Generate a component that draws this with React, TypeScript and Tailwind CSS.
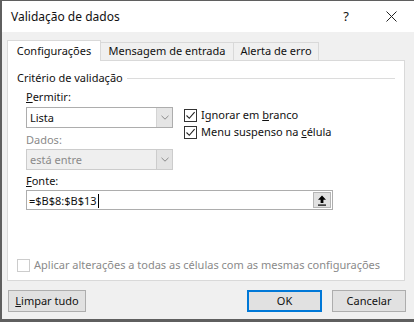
import React from "react";

const font = { fontFamily: '"Noto Sans", "Open Sans", sans-serif' };

function Check({ checked = false, disabled = false }: { checked?: boolean; disabled?: boolean }) {
	return (
		<span
			className={`flex h-[13px] w-[13px] shrink-0 items-center justify-center border bg-white ${
				disabled ? "border-[#cccccc]" : "border-[#333333]"
			}`}
		>
			{checked && (
				<svg width="11" height="11" viewBox="0 0 11 11">
					<path d="M1.5 5.5 L4.3 8.3 L9.6 2.2" fill="none" stroke="#222" strokeWidth="1.1" />
				</svg>
			)}
		</span>
	);
}

function Chevron({ color }: { color: string }) {
	return (
		<svg width="8" height="5" viewBox="0 0 8 5">
			<path d="M0.5 0.8 L4 4.2 L7.5 0.8" fill="none" stroke={color} strokeWidth="1" />
		</svg>
	);
}

function Select({ value, disabled = false }: { value: string; disabled?: boolean }) {
	return (
		<div
			className={`flex h-[21px] w-[147px] border ${
				disabled ? "border-[#cccccc] bg-[#efefef] text-[#8a8a8a]" : "border-[#adadad] bg-white text-[#111111]"
			}`}
		>
			<span className="flex-1 pl-[3px] leading-[19px]">{value}</span>
			<span
				className={`flex w-[16px] items-center justify-center border-l ${
					disabled ? "border-[#cccccc] bg-[#e3e3e3]" : "border-[#d4d4d4] bg-[#e5e5e5]"
				}`}
			>
				<Chevron color="#8a8a8a" />
			</span>
		</div>
	);
}

export default function App() {
	return (
		<div
			className="flex h-[322px] w-[414px] flex-col border-t border-b-[3px] border-l-2 border-[#5f5f5f] bg-[#f0f0f0] text-[11px] text-[#111111]"
			style={font}
		>
			{/* title bar */}
			<div className="flex h-[31px] shrink-0 items-center bg-white pl-[9px]">
				<span className="flex-1 text-[12px]">Validação de dados</span>
				<span className="w-[44px] text-center text-[13px]">?</span>
				<span className="flex w-[46px] items-center justify-center">
					<svg width="11" height="11" viewBox="0 0 11 11">
						<path d="M0.5 0.5 L10.5 10.5 M10.5 0.5 L0.5 10.5" stroke="#222" strokeWidth="1" />
					</svg>
				</span>
			</div>

			<div className="flex flex-1 flex-col px-[5px] pt-[8px]">
				{/* tabs */}
				<div className="flex h-[20px] items-end">
					<div className="relative z-10 -mb-px flex h-[21px] w-[94px] items-center justify-center border border-b-0 border-[#d9d9d9] bg-white">
						Configurações
					</div>
					<div className="flex h-[18px] w-[133px] items-center justify-center border border-l-0 border-b-0 border-[#d9d9d9] bg-[#f0f0f0]">
						Mensagem de entrada
					</div>
					<div className="flex h-[18px] w-[85px] items-center justify-center border border-l-0 border-b-0 border-[#d9d9d9] bg-[#f0f0f0]">
						Alerta de erro
					</div>
				</div>

				{/* tab panel */}
				<div className="flex h-[221px] w-[398px] flex-col border border-[#d9d9d9] bg-white px-[9px] pt-[9px]">
					<div className="flex items-center gap-[4px] leading-[16px]">
						<span>Critério de validação</span>
						<span className="h-px flex-1 bg-[#dcdcdc]" />
					</div>

					<div className="mt-[3px] flex pl-[9px]">
						<div className="flex w-[158px] flex-col">
							<span className="leading-[16px]">
								<u>P</u>ermitir:
							</span>
							<div className="mt-[2px]">
								<Select value="Lista" />
							</div>
							<span className="mt-[4px] leading-[16px] text-[#8a8a8a]">Dados:</span>
							<div className="mt-[1px]">
								<Select value="está entre" disabled />
							</div>
						</div>
						<div className="flex flex-col gap-[1px] pt-[18px]">
							<div className="flex h-[16px] items-center gap-[4px]">
								<Check checked />
								<span>
									Ignorar em <u>b</u>ranco
								</span>
							</div>
							<div className="flex h-[16px] items-center gap-[4px]">
								<Check checked />
								<span>
									Menu suspenso na <u>c</u>élula
								</span>
							</div>
						</div>
					</div>

					<div className="flex flex-col pl-[9px]">
						<span className="mt-[3px] leading-[16px]">
							<u>F</u>onte:
						</span>
						<div className="mt-[1px] flex h-[20px] w-[307px] items-center border border-[#adadad] bg-white">
							<span className="flex-1 pl-[2px] leading-[18px]">
								=$B$8:$B$13<span className="ml-px inline-block h-[14px] w-px translate-y-[3px] bg-black" />
							</span>
							<span className="mr-px flex h-[16px] w-[18px] items-center justify-center border border-[#b5b5b5] bg-[#e1e1e1]">
								<svg width="10" height="11" viewBox="0 0 10 11">
									<path d="M5 0.5 L9 4.8 L6.4 4.8 L6.4 8 L3.6 8 L3.6 4.8 L1 4.8 Z" fill="#000" />
									<rect x="1" y="9.5" width="8" height="1.2" fill="#000" />
								</svg>
							</span>
						</div>
					</div>

					<div className="mt-auto mb-[7px] flex h-[16px] items-center gap-[4px]">
						<Check disabled />
						<span className="text-[#8a8a8a]">Aplicar alterações a todas as células com as mesmas configurações</span>
					</div>
				</div>

				{/* buttons */}
				<div className="mt-[9px] mr-[3px] flex items-center">
					<button className="ml-px h-[22px] w-[78px] border border-[#adadad] bg-[#e1e1e1]">
						<u>L</u>impar tudo
					</button>
					<div className="flex-1" />
					<button className="h-[22px] w-[75px] border-2 border-[#0078d7] bg-[#e1e1e1]">OK</button>
					<button className="ml-[10px] h-[22px] w-[74px] border border-[#adadad] bg-[#e1e1e1]">Cancelar</button>
				</div>
			</div>
		</div>
	);
}
